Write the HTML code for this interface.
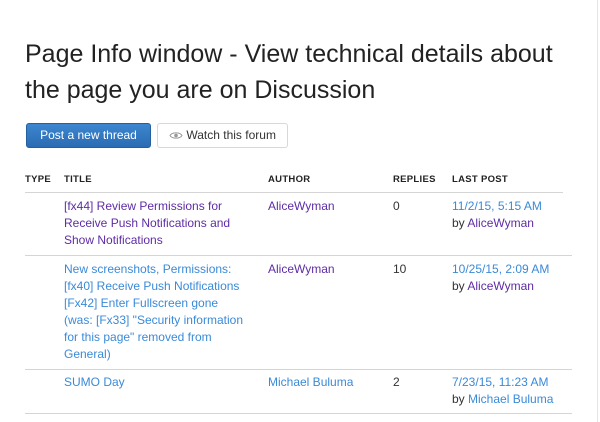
<!DOCTYPE html>
<html><head><style>
*{margin:0;padding:0;box-sizing:border-box}
body{width:600px;height:422px;overflow:hidden;background:#fff;font-family:"Liberation Sans",sans-serif;color:#333;position:relative}
.vl{position:absolute;left:597px;top:0;width:1px;height:422px;background:#e4e4e4}
h1{position:absolute;left:25px;top:36px;width:570px;font-weight:normal;font-size:25px;line-height:36px;color:#222;letter-spacing:0px;white-space:nowrap}
.b1{position:absolute;left:26px;top:123px;width:125px;height:25px;background:linear-gradient(#3d86cf,#2a6cb3);border:1px solid #25609e;border-radius:3px;color:#fff;font-size:12px;line-height:23px;text-align:center}
.b2{position:absolute;left:157px;top:123px;width:131px;height:25px;background:#fff;border:1px solid #d8d8d8;border-radius:3px;color:#333;font-size:12px;line-height:23px;text-align:center}
.th{position:absolute;top:174px;font-size:9.5px;font-weight:bold;color:#222;letter-spacing:0.3px}
.ln{position:absolute;left:25px;height:1px;background:#d5d5d5}
.c{position:absolute;font-size:12px;line-height:17px;white-space:nowrap}
.p{color:#5e2ca5}.bl{color:#3a8ad8}
</style></head><body>
<div class="vl"></div>
<h1>Page Info window - View technical details about<br>the page you are on Discussion</h1>
<div class="b1">Post a new thread</div>
<div class="b2"><svg width="14" height="9" viewBox="0 0 14 9" style="vertical-align:-1px"><path d="M1 4.5C3 1 11 1 13 4.5C11 8 3 8 1 4.5Z" fill="none" stroke="#999" stroke-width="1"/><circle cx="7" cy="4.5" r="1.8" fill="#999"/></svg> Watch this forum</div>
<div class="th" style="left:25px">TYPE</div>
<div class="th" style="left:64px">TITLE</div>
<div class="th" style="left:268px">AUTHOR</div>
<div class="th" style="left:393px">REPLIES</div>
<div class="th" style="left:452px">LAST POST</div>
<div class="ln" style="top:192px;width:538px"></div>
<div class="c p" style="left:64px;top:198px">[fx44] Review Permissions for<br>Receive Push Notifications and<br>Show Notifications</div>
<div class="c p" style="left:268px;top:198px">AliceWyman</div>
<div class="c" style="left:393px;top:198px">0</div>
<div class="c" style="left:452px;top:198px"><span class="bl">11/2/15, 5:15 AM</span><br>by <span class="p">AliceWyman</span></div>
<div class="ln" style="top:255px;width:547px"></div>
<div class="c bl" style="left:64px;top:261px">New screenshots, Permissions:<br>[fx40] Receive Push Notifications<br>[Fx42] Enter Fullscreen gone<br>(was: [Fx33] "Security information<br>for this page" removed from<br>General)</div>
<div class="c p" style="left:268px;top:261px">AliceWyman</div>
<div class="c" style="left:393px;top:261px">10</div>
<div class="c" style="left:452px;top:261px"><span class="bl">10/25/15, 2:09 AM</span><br>by <span class="p">AliceWyman</span></div>
<div class="ln" style="top:369px;width:547px"></div>
<div class="c bl" style="left:64px;top:374px">SUMO Day</div>
<div class="c bl" style="left:268px;top:374px">Michael Buluma</div>
<div class="c" style="left:393px;top:374px">2</div>
<div class="c" style="left:452px;top:374px"><span class="bl">7/23/15, 11:23 AM</span><br>by <span class="bl">Michael Buluma</span></div>
<div class="ln" style="top:413px;width:547px"></div>
</body></html>
